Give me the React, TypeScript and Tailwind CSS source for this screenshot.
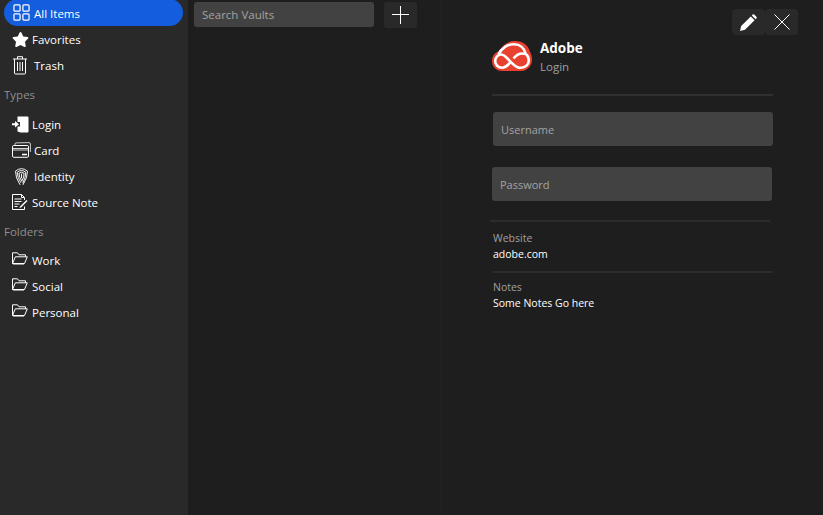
import type { ReactNode } from "react";
import { FaStar } from "react-icons/fa";

const font = { fontFamily: '"Open Sans", "Noto Sans", sans-serif' };

function GridIcon() {
  return (
    <svg width="17" height="17" viewBox="0 0 18 18" fill="none" stroke="white" strokeWidth="1.3" className="ml-px">
      <rect x="1" y="1" width="6.5" height="6.5" rx="1" />
      <rect x="10.5" y="1" width="6.5" height="6.5" rx="1" />
      <rect x="1" y="10.5" width="6.5" height="6.5" rx="1" />
      <rect x="10.5" y="10.5" width="6.5" height="6.5" rx="1" />
    </svg>
  );
}

function TrashIcon() {
  return (
    <svg width="16" height="20" viewBox="0 0 16 19" fill="none" stroke="white" strokeWidth="1">
      <path d="M1 3.500h14M5.500 3.500V1.200h5v2.300" />
      <path d="M2.500 3.500v14a1 1 0 0 0 1 1h9a1 1 0 0 0 1-1v-14" />
      <path d="M5.500 6.500v9M8 6.500v9M10.500 6.500v9" />
    </svg>
  );
}

function LoginIcon() {
  return (
    <svg width="17" height="17" viewBox="0 0 17 17" fill="white">
      <path d="M5.500 .500h10a1 1 0 0 1 1 1v14a1 1 0 0 1-1 1H8.500L5.500 15.500V10.500h2.500V6H5.500z" />
      <path d="M0 7.300h3V5l4 3.300-4 3.200V9.300H0z" />
    </svg>
  );
}

function CardIcon() {
  return (
    <svg width="19" height="16" viewBox="0 0 19 16" fill="none" stroke="white" strokeWidth="1">
      <path d="M3 3.500V2.200Q3 1 4.200.9L17 .6q1.400 0 1.400 1.300V10" strokeOpacity="0.75" />
      <rect x="0.500" y="3.500" width="16" height="11.800" rx="1.200" />
      <path d="M.5 6.500h16M.5 8h16" strokeOpacity="0.8" />
      <path d="M10 12.500h5" strokeWidth="1.600" />
    </svg>
  );
}

function FingerprintIcon() {
  return (
    <svg width="15" height="19" viewBox="0 0 15 20" fill="none" stroke="white" strokeWidth="1" className="ml-[2px]">
      <path d="M1 4.500Q7.500-1 14 4.500M1.200 4.500Q1 11 6 18.800M13.800 4.500Q14 11 9 18.800" />
      <path d="M3 5.500Q7.500 2 12 5.500M3 5.500Q3 11 6.800 16.500M12 5.500Q12 11 8.800 17" />
      <path d="M4.800 6.500Q7.500 4.800 10.200 6.500Q10.500 10.500 7.800 15Q5 11 4.800 6.500Z" />
      <path d="M7.500 7v5" />
    </svg>
  );
}

function NoteIcon() {
  return (
    <svg width="16" height="16" viewBox="0 0 16 16" fill="none" stroke="white" strokeWidth="1">
      <path d="M12.500 6V3.500L9.500.5H.5v15h12v-3" />
      <path d="M9.500.5v3h3" />
      <path d="M2.500 5h7M2.500 7.500h7M2.500 10h5M2.500 12.500h3" />
      <path d="M8 12.500l6.500-6.500 1 1-6.500 6.500-1.500.5z" fill="white" stroke="none" />
    </svg>
  );
}

function FolderIcon() {
  return (
    <svg width="16" height="13" viewBox="0 0 16 13" fill="none" stroke="white" strokeWidth="1" className="-mt-[3px]">
      <path d="M.5 11.500V.8h5l1.500 2h6.500v2" />
      <path d="M.5 11.500l2.800-6.700h12L12.500 11.500z" />
      <path d="M1 12.500h11" strokeOpacity="0.5" />
    </svg>
  );
}

function PencilIcon() {
  return (
    <svg width="17" height="17" viewBox="0 0 17 17" fill="white">
      <path d="M0 17l1.200-5L10.800 2.400l3.800 3.800L5 15.800z" />
      <path d="M11.800 1.400l.8-.8q.8-.7 1.600 0l2.200 2.200q.7.800 0 1.600l-.8.800z" />
    </svg>
  );
}

function CloudLogo() {
  return (
    <svg width="40" height="30" viewBox="0 0 40 30">
      <path
        d="M10 30C4 30 0 25.500 0 20 0 14.500 3.500 11 7.500 10 10 4 16 0 23 0c8 0 13.500 4.500 15 11 1.500 2 2 5.500 2 8 0 6-5 11-11 11z"
        fill="#e8412f"
      />
      <path
        d="M6.500 13.500C9 7.500 15.500 3.200 22 3.200c6 0 10.500 4 11.800 9.800 2 1.500 3 3.800 3 6.500 0 4-3.500 7.200-7.800 7.200H27c-4.500-1-8-5.700-12-9.700-2-2.200-3-3.500-5.500-3.500-3.500 0-6.300 2.800-6.300 6.500s3 6.700 6.800 6.700c3.500 0 6-2.500 8.500-5.500M21.500 17.500c2.500-3 4.500-5 8.500-5 1 0 2.500.2 3.800.5"
        fill="none"
        stroke="white"
        strokeWidth="2.600"
      />
    </svg>
  );
}

function NavRow({
  icon,
  label,
  wide,
  active,
}: {
  icon: ReactNode;
  label: string;
  wide?: boolean;
  active?: boolean;
}) {
  return (
    <div
      className={`flex shrink-0 items-center rounded-full text-[11.5px] text-white ${active ? "h-[27px] bg-[#145ddc]" : "h-[26px]"}`}
    >
      <span className={`flex shrink-0 justify-start pl-2 ${wide ? "w-[30px]" : "w-[28px]"}`}>{icon}</span>
      <span className={active ? "pt-[2px]" : "pt-px"}>{label}</span>
    </div>
  );
}

export default function App() {
  return (
    <div className="flex h-[515px] w-[823px] overflow-hidden bg-[#1e1e1e]" style={font}>
      <aside className="flex w-[188px] shrink-0 flex-col bg-[#292929] pl-1 pr-[5px]">
        <div className="-mt-[1px] h-[27px] shrink-0">
          <NavRow icon={<GridIcon />} label="All Items" wide active />
        </div>
        <NavRow icon={<FaStar className="text-[17px] text-white" />} label="Favorites" />
        <NavRow icon={<TrashIcon />} label="Trash" wide />
        <p className="mt-[7px] flex h-[20px] items-center text-[11.5px] text-[#8f8f8f]">Types</p>
        <div className="mt-[6px] flex flex-col">
          <NavRow icon={<LoginIcon />} label="Login" />
          <NavRow icon={<CardIcon />} label="Card" wide />
          <NavRow icon={<FingerprintIcon />} label="Identity" wide />
          <NavRow icon={<NoteIcon />} label="Source Note" />
        </div>
        <p className="mt-[6px] flex h-[20px] items-center pt-[2px] text-[11.5px] text-[#8f8f8f]">Folders</p>
        <div className="mt-[6px] flex flex-col">
          <NavRow icon={<FolderIcon />} label="Work" />
          <NavRow icon={<FolderIcon />} label="Social" />
          <NavRow icon={<FolderIcon />} label="Personal" />
        </div>
      </aside>

      <section className="flex w-[254px] shrink-0 items-start border-r border-[#232323] pl-[6px] pt-[2px]">
        <div className="flex h-[25px] w-[180px] items-center rounded-[3px] bg-[#424242] pl-2 text-[11.5px] text-[#a3a3a3]">
          Search Vaults
        </div>
        <button className="ml-[10px] flex h-[26px] w-[33px] items-center justify-center rounded-[3px] bg-[#292929]">
          <svg width="17" height="18" viewBox="0 0 17 18" stroke="white" strokeWidth="1">
            <path d="M0 8.500h17M8.500 0v18" />
          </svg>
        </button>
      </section>

      <main className="flex flex-1 flex-col pl-[50px] pr-[25px] text-[11px]">
        <div className="mt-[9px] flex h-[26px] justify-end">
          <button className="flex w-[33px] items-center justify-center rounded-[4px] bg-[#292929]">
            <PencilIcon />
          </button>
          <button className="flex w-[33px] items-center justify-center rounded-[4px] bg-[#292929]">
            <svg width="16" height="16" viewBox="0 0 16 16" stroke="white" strokeWidth="1">
              <path d="M.5.500l15 15M15.500.500l-15 15" />
            </svg>
          </button>
        </div>

        <div className="mt-[6px] flex items-start">
          <CloudLogo />
          <div className="-mt-[3px] ml-2 flex flex-col">
            <span className="h-[20px] text-[13.5px] font-bold leading-[20px] text-white">Adobe</span>
            <span className="text-[11.5px] leading-[17px] text-[#a0a0a0]">Login</span>
          </div>
        </div>

        <div className="mt-[19px] h-[2px] w-[281px] bg-[#303030]" />

        <div className="ml-px mt-[16px] flex h-[34px] w-[280px] items-center rounded-[3px] bg-[#424242] pl-2 pt-[2px] text-[#a3a3a3]">
          Username
        </div>
        <div className="mt-[21px] flex h-[34px] w-[280px] items-center rounded-[3px] bg-[#424242] pl-2 pt-[2px] text-[#a3a3a3]">
          Password
        </div>

        <div className="-ml-[2px] mt-[19px] h-[2px] w-[280px] bg-[#2c2c2c]" />
        <div className="ml-px mt-[8px] text-[10.5px] leading-[16px] text-[#a0a0a0]">Website</div>
        <div className="ml-px text-[10.5px] leading-[16px] text-white">adobe.com</div>
        <div className="ml-px mt-[9px] h-[2px] w-[280px] bg-[#2c2c2c]" />
        <div className="ml-px mt-[6px] text-[10.5px] leading-[16px] text-[#a0a0a0]">Notes</div>
        <div className="ml-px text-[10.5px] leading-[16px] text-white">Some Notes Go here</div>
      </main>
    </div>
  );
}
